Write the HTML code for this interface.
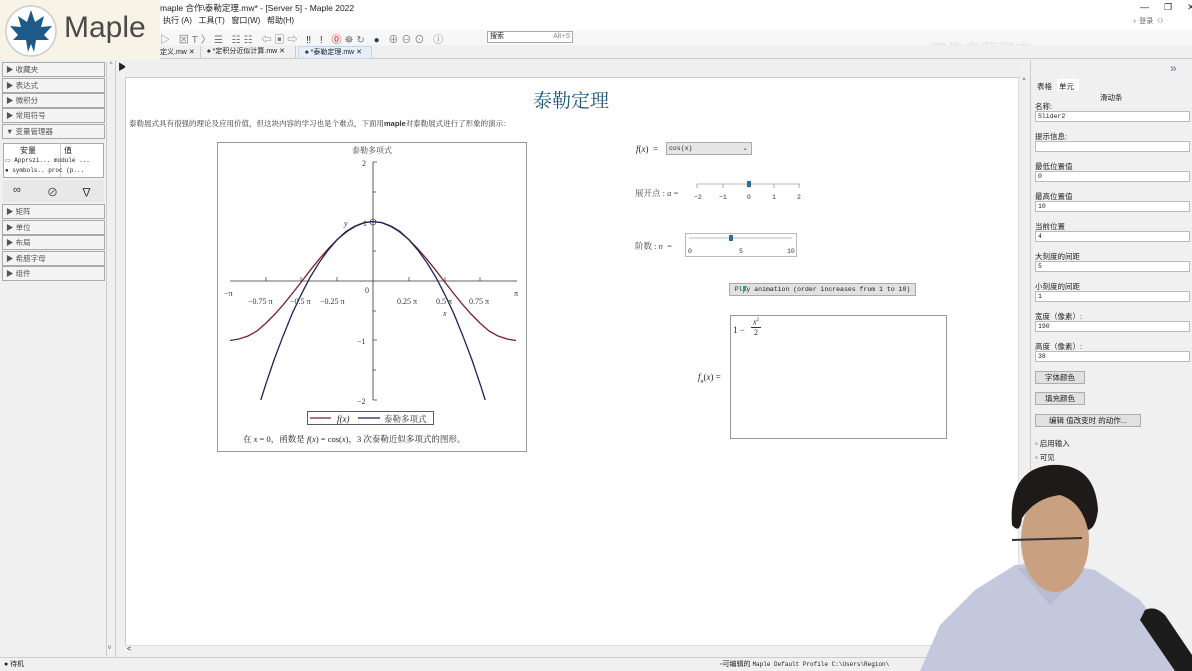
<!DOCTYPE html>
<html><head><meta charset="utf-8"><style>
*{margin:0;padding:0;box-sizing:border-box}
body{width:1192px;height:671px;overflow:hidden;background:#f0f0f0;font-family:"Liberation Sans","Noto Sans CJK SC",sans-serif;font-size:8px;color:#222;position:relative}
.a{position:absolute}
.serif{font-family:"Liberation Serif","Noto Serif CJK SC",serif}
.mono{font-family:"Liberation Mono","Noto Sans CJK SC",monospace}
.lp{position:absolute;left:2px;width:103px;height:15px;background:#f4f4f4;border:1px solid #aaa;font-size:7.5px;line-height:13px;padding-left:3px;color:#555}
.lbl{position:absolute;left:1035px;font-size:7.5px;color:#222}
.inp{position:absolute;left:1035px;width:155px;height:11px;background:#fff;border:1px solid #bbb;font-size:6.5px;line-height:9px;padding-left:2px;font-family:"Liberation Mono",monospace}
.btn{position:absolute;left:1035px;height:13px;background:#e1e1e1;border:1px solid #adadad;font-size:7.5px;line-height:11px;text-align:center}
</style></head><body>
<div class="a" style="left:0;top:0;width:1192px;height:30px;background:#fff"></div>
<div class="a" style="left:0;top:0;width:160px;height:60px;background:#f7f3e6"></div>
<svg class="a" style="left:4px;top:4px" width="54" height="54" viewBox="0 0 54 54"><circle cx="27" cy="27" r="25" fill="#fff" stroke="#ccc" stroke-width="1.5"/><path d="M27 6 L31 18 L40 12 L37 23 L48 22 L40 31 L45 36 L32 36 L30 48 L27 40 L24 48 L22 36 L9 36 L14 31 L6 22 L17 23 L14 12 L23 18 Z" fill="#1d5a8a"/></svg>
<div class="a" style="left:64px;top:11px;font-size:30px;color:#4a4a4a">Maple</div>
<div class="a" style="left:160px;top:2px;font-size:8.5px">maple 合作\泰勒定理.mw* - [Server 5] - Maple 2022</div>
<div class="a" style="left:163px;top:15px;font-size:8px">执行 (A) &nbsp; 工具(T) &nbsp; 窗口(W) &nbsp; 帮助(H)</div>
<div class="a" style="left:1140px;top:2px;font-size:9px">—&nbsp;&nbsp;&nbsp;&nbsp;&nbsp;&nbsp;❐&nbsp;&nbsp;&nbsp;&nbsp;&nbsp;&nbsp;✕</div>
<div class="a" style="left:1132px;top:16px;font-size:7px;color:#666">♁ 登录 &nbsp;⚇</div>
<div class="a" style="left:160px;top:30px;width:1032px;height:15px;background:#f7f7f7"></div>
<div class="a" style="left:160px;top:31px;font-size:10px;color:#777;letter-spacing:3px">▷ ⊠T〉☰ ☷☷ ⇦▣⇨ <span style="color:#333">‼ !</span> <span style="color:#c00">⓪</span>☸↻ <span style="color:#246">●</span> ⊕⊖⊙ ⓘ</div>
<div class="a" style="left:487px;top:31px;width:86px;height:12px;background:#fff;border:1px solid #aaa;font-size:7px;padding-left:2px;line-height:10px">搜索<span style="float:right;color:#888;padding-right:2px">Alt+S</span></div>
<div class="a" style="left:930px;top:36px;font-size:17px;color:#e8e8e8;font-weight:bold">宋浩老师官方</div>
<div class="a" style="left:160px;top:45px;width:1032px;height:14px;background:#f0f0f0;border-bottom:1px solid #ccc"></div>
<div class="a" style="left:160px;top:47px;font-size:7px">定义.mw ✕</div>
<div class="a" style="left:200px;top:46px;width:96px;height:12px;font-size:7px;border-left:1px solid #ccc;border-right:1px solid #ccc;padding-left:6px;line-height:12px">♠ *定积分近似计算.mw ✕</div>
<div class="a" style="left:298px;top:46px;width:74px;height:13px;font-size:7px;background:#e5eefa;border:1px solid #c5d5ea;padding-left:6px;line-height:11px">♠ *泰勒定理.mw ✕</div>
<div class="a" style="left:0;top:60px;width:116px;height:597px;background:#f0f0f0;border-right:1px solid #ccc"></div>
<div class="a" style="left:106px;top:62px;width:9px;height:594px;border-left:1px solid #ccc;font-size:6px;text-align:center;color:#555">^</div>
<div class="a" style="left:108px;top:645px;font-size:6px;color:#555">v</div>
<div class="lp" style="top:62px">▶ 收藏夹</div>
<div class="lp" style="top:78px">▶ 表达式</div>
<div class="lp" style="top:93px">▶ 微积分</div>
<div class="lp" style="top:108px">▶ 常用符号</div>
<div class="lp" style="top:124px">▼ 变量管理器</div>
<div class="a" style="left:3px;top:143px;width:101px;height:35px;background:#fff;border:1px solid #aaa"></div>
<div class="a" style="left:20px;top:145px;font-size:8px">安量</div><div class="a" style="left:64px;top:145px;font-size:8px">值</div>
<div class="a" style="left:60px;top:143px;width:1px;height:34px;background:#ccc"></div>
<div class="a mono" style="left:5px;top:157px;font-size:6px">▭ Apprszi... module ...</div>
<div class="a mono" style="left:5px;top:167px;font-size:6px">● symbols.. proc (p...</div>
<div class="a" style="left:3px;top:180px;width:101px;height:22px;background:#e8e8e8"></div>
<div class="a" style="left:13px;top:184px;font-size:11px;color:#333">∞</div>
<div class="a" style="left:47px;top:184px;font-size:11px;color:#333">⊘</div>
<div class="a" style="left:81px;top:184px;font-size:11px;color:#333">∇</div>
<div class="lp" style="top:204px">▶ 矩阵</div>
<div class="lp" style="top:220px">▶ 单位</div>
<div class="lp" style="top:235px">▶ 布局</div>
<div class="lp" style="top:251px">▶ 希腊字母</div>
<div class="lp" style="top:266px">▶ 组件</div>
<div class="a" style="left:118px;top:60px;font-size:9px">▶</div>
<div class="a" style="left:125px;top:60px;width:895px;height:18px;background:#efefef;border-bottom:1px solid #ccc"></div>
<div class="a" style="left:125px;top:78px;width:893px;height:567px;background:#fff;border-left:1px solid #ccc"></div>
<div class="a" style="left:1018px;top:78px;width:11px;height:567px;background:#f0f0f0;border-left:1px solid #ddd;font-size:6px;text-align:center">^</div>
<div class="a" style="left:125px;top:645px;width:904px;height:11px;background:#f0f0f0;border-top:1px solid #ddd;font-size:7px;padding-left:2px">&lt;</div>
<div class="a serif" style="left:533px;top:86px;font-size:19px;color:#1d5577">泰勒定理</div>
<div class="a serif" style="left:129px;top:118px;font-size:7.5px;color:#333">泰勒展式具有很强的理论及应用价值，但这块内容的学习也是个难点，下面用<b style="font-family:'Liberation Sans'">maple</b>对泰勒展式进行了形象的演示：</div>
<svg class="a serif" style="left:0;top:0" width="1192" height="671">
<rect x="217.5" y="142.5" width="309" height="309" fill="#fff" stroke="#999"/>
<text x="372" y="153" font-size="8" text-anchor="middle" fill="#444" font-family="Liberation Serif,Noto Serif CJK SC,serif">泰勒多项式</text>
<line x1="230" y1="281" x2="517" y2="281" stroke="#333" stroke-width=".8"/>
<line x1="373" y1="162" x2="373" y2="400" stroke="#333" stroke-width=".8"/>
<g stroke="#333" stroke-width=".7">
<line x1="266" y1="281" x2="266" y2="277"/><line x1="301" y1="281" x2="301" y2="277"/><line x1="337" y1="281" x2="337" y2="277"/><line x1="409" y1="281" x2="409" y2="277"/><line x1="445" y1="281" x2="445" y2="277"/><line x1="480" y1="281" x2="480" y2="277"/>
<line x1="373" y1="162" x2="377" y2="162"/><line x1="373" y1="192" x2="376" y2="192"/><line x1="373" y1="222" x2="377" y2="222"/><line x1="373" y1="251" x2="376" y2="251"/><line x1="373" y1="311" x2="376" y2="311"/><line x1="373" y1="340" x2="377" y2="340"/><line x1="373" y1="370" x2="376" y2="370"/><line x1="373" y1="400" x2="377" y2="400"/></g>
<g font-size="8" fill="#333" font-family="Liberation Serif,serif">
<text x="362" y="166">2</text><text x="363" y="226">1</text><text x="365" y="293">0</text><text x="357" y="344">−1</text><text x="357" y="404">−2</text>
<text x="224" y="296">−π</text><text x="514" y="296">π</text>
<text x="248" y="304">−0.75 π</text><text x="290" y="304">−0.5 π</text><text x="320" y="304">−0.25 π</text>
<text x="397" y="304">0.25 π</text><text x="436" y="304">0.5 π</text><text x="469" y="304">0.75 π</text>
<text x="344" y="226" font-style="italic">y</text><text x="443" y="316" font-style="italic">x</text></g>
<circle cx="373" cy="222" r="3" fill="none" stroke="#333" stroke-width=".6"/>
<polyline fill="none" stroke="#7a1f35" stroke-width="1.3" points="230,340.5 239,339 248,336 257,331 266,323.1 275,314 284,303.8 293,292.6 302,281 311,269.3 320,258.2 329,247.9 338,238.9 347,231.5 356,226 364.5,222.6 373,221.5 381.5,222.6 390,226 399,231.5 408,238.9 417,247.9 426,258.2 435,269.3 444,281 453,292.6 462,303.8 471,314 480,323.1 489,331 498,336 507,339 516,340.5"/>
<polyline fill="none" stroke="#1b2450" stroke-width="1.3" points="260.8,400 265,386.7 274,360 283,336.2 292,314 301,294.9 310,277.5 319,262.8 328,250.3 337,239.8 346,231.5 355,226.1 364,222.6 373,221.5 382,222.6 391,226.1 400,231.5 409,239.8 418,250.3 427,262.8 436,277.5 445,294.9 454,314 463,336.2 472,360 481,386.7 485.2,400"/>
<rect x="307.5" y="411.5" width="126" height="13" fill="#fff" stroke="#333" stroke-width=".8"/>
<line x1="310" y1="418" x2="331" y2="418" stroke="#7a1f35" stroke-width="1.3"/>
<text x="337" y="422" font-size="9" font-style="italic" fill="#222">f(x)</text>
<line x1="358" y1="418" x2="380" y2="418" stroke="#1b2450" stroke-width="1.3"/>
<text x="384" y="422" font-size="8.5" fill="#333" font-family="Liberation Serif,Noto Serif CJK SC,serif">泰勒多项式</text>
<text x="243" y="442" font-size="8.5" fill="#222" font-family="Liberation Serif,Noto Serif CJK SC,serif">在 <tspan font-style="italic">x</tspan> = 0，函数是 <tspan font-style="italic">f</tspan>(<tspan font-style="italic">x</tspan>) = cos(<tspan font-style="italic">x</tspan>)，3 次泰勒近似多项式的图形。</text>
<line x1="697" y1="184" x2="800" y2="184" stroke="#bbb"/>
<g stroke="#aaa"><line x1="697" y1="184" x2="697" y2="188"/><line x1="723" y1="184" x2="723" y2="188"/><line x1="749" y1="184" x2="749" y2="188"/><line x1="774" y1="184" x2="774" y2="188"/><line x1="799" y1="184" x2="799" y2="188"/></g>
<rect x="747" y="181" width="4" height="6" fill="#2c6da0"/>
<g font-size="6.5" fill="#333" font-family="Liberation Mono,monospace"><text x="694" y="199">−2</text><text x="719" y="199">−1</text><text x="747" y="199">0</text><text x="772" y="199">1</text><text x="797" y="199">2</text></g>
<rect x="685.5" y="233.5" width="111" height="23" fill="#fff" stroke="#bbb"/>
<line x1="689" y1="238" x2="792" y2="238" stroke="#bbb"/>
<rect x="729" y="235" width="4" height="6" fill="#2c6da0"/>
<g font-size="6.5" fill="#333" font-family="Liberation Mono,monospace"><text x="688" y="253">0</text><text x="739" y="253">5</text><text x="787" y="253">10</text></g>
</svg>
<div class="a serif" style="left:636px;top:144px;font-size:9px"><i>f</i>(<i>x</i>) &nbsp;=</div>
<div class="a mono" style="left:666px;top:142px;width:86px;height:13px;background:#e5e5e5;border:1px solid #aaa;font-size:6.5px;line-height:11px;padding-left:2px">cos(x)<span style="float:right;padding-right:3px">⌄</span></div>
<div class="a serif" style="left:635px;top:187px;font-size:8.5px;color:#444">展开点 : <i>a</i> =</div>
<div class="a serif" style="left:635px;top:240px;font-size:8.5px;color:#444">阶数 : <i>n</i> &nbsp;=</div>
<div class="a mono" style="left:729px;top:283px;width:187px;height:13px;background:#e1e1e1;border:1px solid #aaa;font-size:6.5px;line-height:11px;text-align:center">Play animation (order increases from 1 to 10)</div>
<div class="a" style="left:743px;top:286px;width:0;height:0;border-left:4px solid #2a8;border-top:0;border-bottom:8px solid transparent"></div>
<div class="a" style="left:730px;top:315px;width:217px;height:124px;background:#fff;border:1px solid #999"></div>
<div class="a serif" style="left:733px;top:325px;font-size:9px">1 − </div>
<div class="a serif" style="left:751px;top:316px;font-size:8px;text-align:center;line-height:9px"><i>x</i><sup style="font-size:5px">2</sup><div style="border-top:1px solid #333;width:10px">2</div></div>
<div class="a serif" style="left:698px;top:372px;font-size:9px"><i>f<sub style="font-size:6px">n</sub></i>(<i>x</i>) =</div>
<div class="a" style="left:1030px;top:60px;width:162px;height:597px;background:#f0f0f0;border-left:1px solid #ccc"></div>
<div class="a" style="left:1170px;top:61px;font-size:12px;color:#5577aa">»</div>
<div class="a" style="left:1037px;top:81px;font-size:7.5px">表格</div>
<div class="a" style="left:1057px;top:79px;width:22px;height:12px;background:#fff;font-size:7.5px;padding:2px 2px">单元</div>
<div class="a" style="left:1100px;top:92px;font-size:7.5px">滑动条</div>
<div class="lbl" style="top:101px">名称:</div><div class="inp" style="top:111px">Slider2</div>
<div class="lbl" style="top:131px">提示信息:</div><div class="inp" style="top:141px"></div>
<div class="lbl" style="top:161px">最低位置值</div><div class="inp" style="top:171px">0</div>
<div class="lbl" style="top:191px">最高位置值</div><div class="inp" style="top:201px">10</div>
<div class="lbl" style="top:221px">当前位置</div><div class="inp" style="top:231px">4</div>
<div class="lbl" style="top:251px">大刻度的间距</div><div class="inp" style="top:261px">5</div>
<div class="lbl" style="top:281px">小刻度的间距</div><div class="inp" style="top:291px">1</div>
<div class="lbl" style="top:311px">宽度（像素）:</div><div class="inp" style="top:321px">190</div>
<div class="lbl" style="top:341px">高度（像素）:</div><div class="inp" style="top:351px">38</div>
<div class="btn" style="top:371px;width:50px">字体颜色</div>
<div class="btn" style="top:392px;width:50px">填充颜色</div>
<div class="btn" style="top:414px;width:106px">编辑 值改变时 的动作...</div>
<div class="lbl" style="top:438px">▫ 启用输入</div>
<div class="lbl" style="top:452px">▫ 可见</div>
<div class="a" style="left:0;top:657px;width:1192px;height:14px;background:#f0f0f0;border-top:1px solid #ccc"></div>
<div class="a" style="left:4px;top:659px;font-size:7px">● 待机</div>
<div class="a" style="left:720px;top:659px;font-size:7px">▫可编辑的 <span class="mono" style="font-size:6px">Maple Default Profile C:\Users\Region\</span></div>
<svg class="a" style="left:900px;top:440px" width="292" height="231">
<path d="M20 231 L40 185 L75 150 L115 125 L150 122 L195 130 L240 160 L270 200 L285 231 Z" fill="#c4c8dc"/>
<path d="M118 128 L150 165 L185 130 Z" fill="#b8bcd2"/>
<ellipse cx="155" cy="100" rx="34" ry="52" fill="#c9a080"/>
<path d="M112 85 Q108 30 150 25 Q195 22 198 70 Q196 88 188 90 Q182 62 160 55 Q135 58 122 78 Q120 95 112 85 Z" fill="#1e1a1a"/>
<path d="M112 100 L182 98" stroke="#333" stroke-width="2"/>
<path d="M245 170 Q255 165 265 175 L292 215 L292 231 L275 231 L240 180 Z" fill="#1c1c1c"/>
</svg>
</body></html>
